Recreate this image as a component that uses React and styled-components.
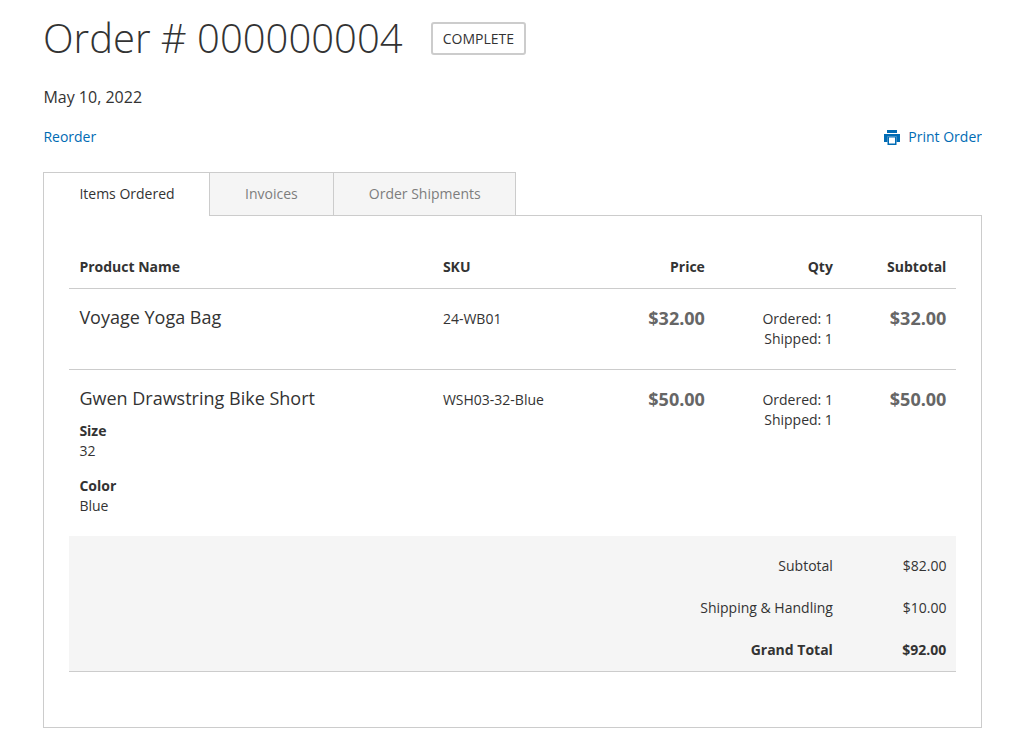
import React from "react";
import styled, { createGlobalStyle } from "styled-components";

const Global = createGlobalStyle`
  html, body { margin: 0; padding: 0; background: #fff; }
  body { font-family: "Open Sans", "Liberation Sans", sans-serif; font-size: 14px; line-height: 20px; color: #333; }
`;
const Page = styled.main`
  width: 938.6px; height: 738px; margin-left: 43.4px; overflow: hidden; box-sizing: border-box; padding-top: 13px;
`;
const TitleRow = styled.div`display: flex; align-items: flex-start;`;
const Title = styled.h1`margin: 0 0 0 -0.4px; font-size: 40px; font-weight: 300; line-height: 50px; color: #333;`;
const Status = styled.span`
  margin: 9px 0 0 28.4px; height: 33px; box-sizing: border-box; border: 2px solid #ccc; border-radius: 3px;
  font-size: 14px; line-height: 29px; text-transform: uppercase; color: #333; padding: 0 10px 0 9.7px;
`;
const OrderDate = styled.div`margin-top: 21px; font-size: 16px; line-height: 26px;`;
const Actions = styled.div`display: flex; justify-content: space-between; align-items: center; margin-top: 14px; height: 26px;`;
const Action = styled.a`display: inline-flex; align-items: center; gap: 8px; color: #006bb4; font-size: 14px; line-height: 20px; text-decoration: none;`;
const Tabs = styled.div`display: flex; margin-top: 22px; height: 44px; position: relative; z-index: 1;`;
const Tab = styled.div`
  box-sizing: border-box; height: 44px; padding: 0 ${p => p.$pr || 35}px 0 35px; line-height: 41px; border: 1px solid #ccc;
  border-left-width: ${p => p.$first ? 1 : 0}px; border-bottom: ${p => p.$active ? "0" : "1px solid #ccc"};
  background: ${p => p.$active ? "#fff" : "#f5f5f5"}; color: ${p => p.$active ? "#333" : "#7d7d7d"};
`;
const Panel = styled.section`
  box-sizing: border-box; height: 513px; margin-top: -1px; border: 1px solid #ccc; padding: 25px 25px 0;
`;
const Table = styled.table`width: 887px; border-collapse: collapse; table-layout: fixed;`;
const Th = styled.th`
  box-sizing: border-box; height: 47px; padding: 5px 10px 11px; font-weight: 700; font-size: 14px; line-height: 20px;
  text-align: ${p => p.$right ? "right" : "left"}; border-bottom: 1px solid #ccc; vertical-align: bottom;
`;
const Row = styled.tr`& + & > td { border-top: 1px solid #ccc; }`;
const Td = styled.td`
  padding: 20px 10px; vertical-align: top; font-size: 14px; line-height: 20px;
  text-align: ${p => p.$right ? "right" : "left"};
`;
const Name = styled.div`font-size: 18px; line-height: 20px; margin-top: -2px; margin-bottom: 13px;`;
const OptLabel = styled.div`font-weight: 700;`;
const OptValue = styled.div`margin-bottom: 15px; &:last-child { margin-bottom: 0; }`;
const Money = styled.span`display: block; margin-top: -1px; font-size: 18px; color: #666; line-height: 20px; font-weight: 700;`;
const FootRow = styled.tr`background: #f5f5f5; &:first-child > td { padding-top: 20px; }`;
const FootLabel = styled.td`
  padding: 11px 10px; text-align: right; font-weight: ${p => p.$bold ? 700 : 400}; vertical-align: top;
`;
const FootLast = styled.tfoot`border-bottom: 1px solid #ccc;`;

const PrinterIcon = () => (
  <svg width="16" height="15" viewBox="0 0 16 15" aria-hidden="true">
    <path fill="#006bb4" d="M3 0h10v3H3zM0 4h16v8h-3.5V6.5h-9V12H0z" />
    <path fill="#006bb4" fillRule="evenodd" d="M3.5 6.5h9V15h-9zM5 7.5v6h6v-6z" />
  </svg>
);

const items = [
  { name: "Voyage Yoga Bag", sku: "24-WB01", price: "$32.00", options: [] },
  { name: "Gwen Drawstring Bike Short", sku: "WSH03-32-Blue", price: "$50.00", options: [["Size", "32"], ["Color", "Blue"]] },
];

export default function App() {
  return (
    <Page>
      <Global />
      <TitleRow>
        <Title>Order # 000000004</Title>
        <Status>Complete</Status>
      </TitleRow>
      <OrderDate>May 10, 2022</OrderDate>
      <Actions>
        <Action href="#">Reorder</Action>
        <Action href="#"><PrinterIcon />Print Order</Action>
      </Actions>
      <Tabs>
        <Tab $active $first $pr={34.5}>Items Ordered</Tab>
        <Tab>Invoices</Tab>
        <Tab $pr={34.5}>Order Shipments</Tab>
      </Tabs>
      <Panel>
        <Table>
          <colgroup>
            <col style={{ width: 363.5 }} /><col style={{ width: 155 }} /><col style={{ width: 127 }} /><col style={{ width: 128 }} /><col style={{ width: 113.5 }} />
          </colgroup>
          <thead>
            <tr>
              <Th>Product Name</Th><Th>SKU</Th><Th $right>Price</Th><Th $right>Qty</Th><Th $right>Subtotal</Th>
            </tr>
          </thead>
          <tbody>
            {items.map(i => (
              <Row key={i.sku}>
                <Td>
                  <Name>{i.name}</Name>
                  {i.options.map(([l, v]) => (
                    <React.Fragment key={l}><OptLabel>{l}</OptLabel><OptValue>{v}</OptValue></React.Fragment>
                  ))}
                </Td>
                <Td>{i.sku}</Td>
                <Td $right><Money>{i.price}</Money></Td>
                <Td $right>Ordered: 1<br />Shipped: 1</Td>
                <Td $right><Money>{i.price}</Money></Td>
              </Row>
            ))}
          </tbody>
          <FootLast>
            <FootRow><FootLabel colSpan="4">Subtotal</FootLabel><FootLabel>$82.00</FootLabel></FootRow>
            <FootRow><FootLabel colSpan="4">Shipping &amp; Handling</FootLabel><FootLabel>$10.00</FootLabel></FootRow>
            <FootRow><FootLabel colSpan="4" $bold>Grand Total</FootLabel><FootLabel $bold>$92.00</FootLabel></FootRow>
          </FootLast>
        </Table>
      </Panel>
    </Page>
  );
}
